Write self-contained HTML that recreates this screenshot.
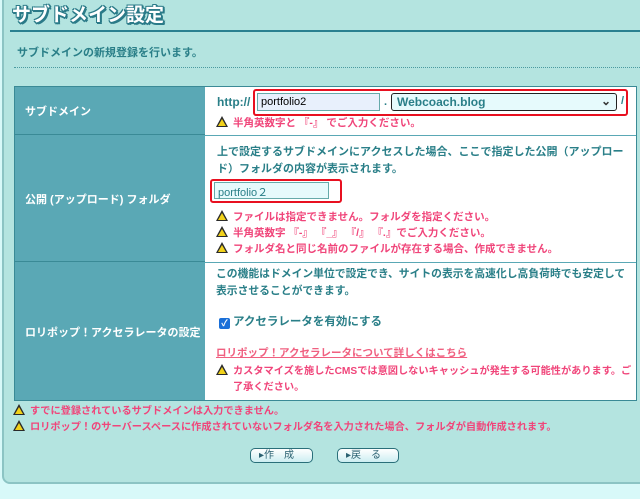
<!DOCTYPE html>
<html><head><meta charset="utf-8">
<style>
body{margin:0;width:640px;height:499px;background:#d8f9f9;font-family:"Liberation Sans","Noto Sans CJK JP",sans-serif;position:relative;overflow:hidden}
.panel{position:absolute;left:2px;top:-10px;width:650px;height:494px;background:#b4e4e0;border:2px solid #8cc4c4;border-radius:8px;box-sizing:border-box}
.abs{position:absolute}
.t{color:#2a7f88;font-weight:bold;font-size:11px;white-space:nowrap}
.r{color:#f0457a;font-weight:bold;font-size:10.5px;white-space:nowrap}
.w{display:inline-block;width:0;height:0;border-left:6px solid transparent;border-right:6px solid transparent;border-bottom:11px solid #2a2a2a;position:relative;vertical-align:-1px;margin-right:5px}
.w:after{content:"";position:absolute;left:-4px;top:3px;border-left:4px solid transparent;border-right:4px solid transparent;border-bottom:7px solid #f2d21a}
.lc{position:absolute;left:15px;width:190px;background:#5aa8b5;color:#fff;font-weight:bold;font-size:11px;display:flex;align-items:center;padding-left:10px;box-sizing:border-box;border-bottom:1px solid #3a8a96}
.rc{position:absolute;left:205px;width:431px;background:#fff;border-bottom:1px solid #5aa8b5}
.btn{position:absolute;top:448px;height:15px;border:1px solid #2a6f7a;border-radius:5px;background:linear-gradient(#fff,#cdeef2);font-size:10px;color:#2a6070;box-sizing:border-box;line-height:13px;padding-left:8px}
</style></head><body>
<div class="panel"></div>
<div class="abs" style="left:12px;top:0px;font-size:19px;font-weight:bold;color:#fff;text-shadow:-1px -1px 0 #2a7a88,1px -1px 0 #2a7a88,-1px 1px 0 #2a7a88,1px 1px 0 #2a7a88,2px 2px 0 #2a7a88,0 2px 0 #2a7a88,2px 0 0 #2a7a88">サブドメイン設定</div>
<div class="abs" style="left:10px;top:30px;width:630px;height:2px;background:#2a8090"></div>
<div class="abs t" style="left:17px;top:44px">サブドメインの新規登録を行います。</div>
<div class="abs" style="left:14px;top:67px;width:626px;border-top:1px dotted #4a9aa0"></div>
<div class="abs" style="left:14px;top:86px;width:623px;height:315px;border:1px solid #3a8a96;background:#5aa8b5;box-sizing:border-box"></div>
<div class="lc" style="top:87px;height:48px">サブドメイン</div>
<div class="rc" style="top:87px;height:48px"></div>
<div class="lc" style="top:136px;height:126px">公開 (アップロード) フォルダ</div>
<div class="rc" style="top:136px;height:126px"></div>
<div class="lc" style="top:263px;height:137px;border:0">ロリポップ！アクセラレータの設定</div>
<div class="rc" style="top:263px;height:137px;border:0"></div>

<div class="abs t" style="left:217px;top:95px;font-size:12px">http://</div>
<div class="abs" style="left:257px;top:93px;width:123px;height:18px;background:#e8f0fc;border:1px solid #6aa;box-sizing:border-box;font-size:11px;padding:2px 3px">portfolio2</div>
<div class="abs t" style="left:384px;top:96px">.</div>
<div class="abs" style="left:391px;top:93px;width:226px;height:18px;background:#e6fafc;border:1.5px solid #222;border-radius:3px;box-sizing:border-box;font-size:12px;font-weight:bold;color:#2a7f88;padding:1px 5px">Webcoach.blog<span style="position:absolute;right:5px;top:0;color:#333">⌄</span></div>
<div class="abs t" style="left:621px;top:95px">/</div>
<div class="abs" style="left:253px;top:89px;width:375px;height:27px;border:2.5px solid #e81020;border-radius:3px;box-sizing:border-box"></div>
<div class="abs r" style="left:216px;top:115px"><span class="w"></span>半角英数字と 『-』 でご入力ください。</div>

<div class="abs t" style="left:217px;top:144px;line-height:17px">上で設定するサブドメインにアクセスした場合、ここで指定した公開（アップロー<br>ド）フォルダの内容が表示されます。</div>
<div class="abs" style="left:214px;top:182px;width:115px;height:17px;background:#e6fafc;border:1px solid #6aa;box-sizing:border-box;font-size:11px;color:#2a7f88;padding:1px 3px">portfolio２</div>
<div class="abs" style="left:210px;top:179px;width:132px;height:24px;border:2.5px solid #e81020;border-radius:3px;box-sizing:border-box"></div>
<div class="abs r" style="left:216px;top:209px;line-height:16px"><span class="w"></span>ファイルは指定できません。フォルダを指定ください。<br><span class="w"></span>半角英数字 『-』 『_』 『/』 『.』でご入力ください。<br><span class="w"></span>フォルダ名と同じ名前のファイルが存在する場合、作成できません。</div>

<div class="abs t" style="left:216px;top:266px;line-height:17px;font-size:10.8px">この機能はドメイン単位で設定でき、サイトの表示を高速化し高負荷時でも安定して<br>表示させることができます。</div>
<div class="abs t" style="left:219px;top:313px;font-size:11.5px"><span style="display:inline-block;width:11px;height:11px;background:#1a6fd8;border-radius:2px;color:#fff;font-size:9px;line-height:11px;text-align:center;vertical-align:-1px;margin-right:3px">✓</span>アクセラレータを有効にする</div>
<div class="abs r" style="left:216px;top:345px;text-decoration:underline;color:#f06080">ロリポップ！アクセラレータについて詳しくはこちら</div>
<div class="abs r" style="left:216px;top:364px;line-height:16px;font-size:10.2px"><span class="w"></span>カスタマイズを施したCMSでは意図しないキャッシュが発生する可能性があります。ご<br><span style="padding-left:17px">了承ください。</span></div>

<div class="abs r" style="left:13px;top:404px;line-height:16px;font-size:10.2px"><span class="w"></span>すでに登録されているサブドメインは入力できません。<br><span class="w"></span>ロリポップ！のサーバースペースに作成されていないフォルダ名を入力された場合、フォルダが自動作成されます。</div>
<div class="btn" style="left:250px;width:63px">▸作　成</div>
<div class="btn" style="left:337px;width:62px">▸戻　る</div>
</body></html>
